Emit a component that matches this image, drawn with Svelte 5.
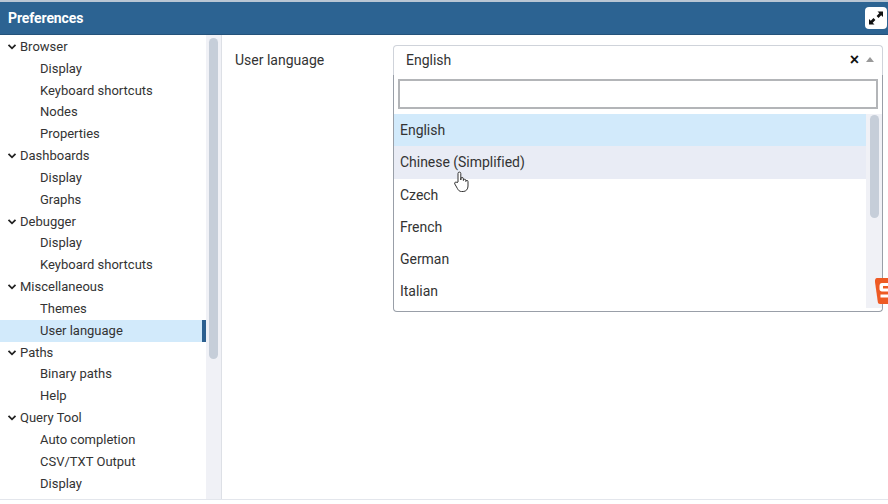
<script>
  const tree = [
    { label: 'Browser', children: ['Display', 'Keyboard shortcuts', 'Nodes', 'Properties'] },
    { label: 'Dashboards', children: ['Display', 'Graphs'] },
    { label: 'Debugger', children: ['Display', 'Keyboard shortcuts'] },
    { label: 'Miscellaneous', children: ['Themes', 'User language'] },
    { label: 'Paths', children: ['Binary paths', 'Help'] },
    { label: 'Query Tool', children: ['Auto completion', 'CSV/TXT Output', 'Display'] }
  ];
  const langs = ['English', 'Chinese (Simplified)', 'Czech', 'French', 'German', 'Italian'];
</script>

<div class="page">
  <div class="topline"></div>
  <header class="header">
    <span class="title">Preferences</span>
    <button class="expand" aria-label="Maximize">
      <svg width="20" height="20" viewBox="0 0 20 20">
        <path d="M11.5 3.5h5.500v5.500l-1.800-1.800-2.700 2.700-1.900-1.900 2.700-2.700z" fill="#111"/>
        <path d="M8.500 16.500h-5.500v-5.500l1.800 1.800 2.700-2.700 1.900 1.900-2.700 2.700z" fill="#111"/>
      </svg>
    </button>
  </header>
  <div class="body">
    <aside class="side">
      <nav class="tree">
        {#each tree as group}
          <div class="row parent">
            <svg class="chev" width="10" height="8" viewBox="0 0 10 8">
              <path d="M1.500 1.800 5 5.300l3.500-3.500" fill="none" stroke="#222" stroke-width="1.800"/>
            </svg>
            {group.label}
          </div>
          {#each group.children as child}
            <div class="row child" class:active={child === 'User language'}>{child}</div>
          {/each}
        {/each}
      </nav>
      <div class="track"><div class="thumb"></div></div>
    </aside>
    <main class="content">
      <label class="lbl" for="search">User language</label>
      <div class="select">
        <div class="value">
          <span class="val-text">English</span>
          <span class="clear">×</span>
          <span class="arrow"></span>
        </div>
        <div class="dropdown">
          <div class="searchbox"><input id="search" type="text" /></div>
          <div class="list">
            <div class="options">
              {#each langs as l, i}
                <div class="opt" class:sel={i === 0} class:hov={i === 1}>{l}</div>
              {/each}
            </div>
            <div class="dd-track"><div class="dd-thumb"></div></div>
          </div>
          <svg class="cursor" width="18" height="22" viewBox="0 0 18 22">
            <path d="M5 11V2.500a1.400 1.400 0 0 1 2.800 0V9l0-1.200a1.300 1.300 0 0 1 2.600 0V9.500a1.200 1.200 0 0 1 2.400 0v1a1.100 1.100 0 0 1 2.200 0v4.500c0 3-1.800 5.500-4.800 5.500H8.500c-2 0-3-1-4-2.800L1.800 13c-.8-1.500 1.200-2.800 2.200-1.400z" fill="#fff" stroke="#333" stroke-width="1"/>
          </svg>
        </div>
      </div>
      <svg class="badge" width="14" height="26" viewBox="0 0 14 26">
        <path d="M3 0h11v26H6C4.500 26 4 25 3.800 24L1 4c-.2-2.500.6-4 2-4z" fill="#ee5a24"/>
        <path d="M14 5H8C6 5 5.500 6.500 5.500 8v3c0 1.500 1 2.500 2.500 2.500h6v-3H9V8h5zM14 16.500H6.500v3H14z" fill="#fff"/>
      </svg>
    </main>
  </div>
</div>

<style>
  :global(body) { margin: 0; background: #fff; }
  .page {
    width: 888px;
    height: 504px;
    display: flex;
    flex-direction: column;
    overflow: hidden;
    font-family: Roboto, "Liberation Sans", sans-serif;
    font-size: 14px;
    color: #222;
    background: #fff;
  }
  .topline { height: 2px; background: #b9c6d4; flex: none; }
  .header {
    height: 32px;
    flex: none;
    background: #2c6392;
    display: flex;
    align-items: center;
    justify-content: space-between;
    padding: 0 0 0 8px;
    border-bottom: 1px solid #24527a;
    box-sizing: content-box;
  }
  .title { color: #fff; font-weight: 700; font-size: 14px; letter-spacing: -0.1px; }
  .expand {
    width: 22px;
    height: 22px;
    margin-right: 1px;
    padding: 0;
    border: 0;
    border-radius: 4px;
    background: #fff;
    display: flex;
    align-items: center;
    justify-content: center;
  }
  .body { flex: 1; display: flex; min-height: 0; margin-bottom: 4px; border-bottom: 1px solid #e3e6ec; }
  .side {
    width: 222px;
    flex: none;
    display: flex;
    box-sizing: border-box;
    border-right: 1px solid #dde0e6;
    overflow: hidden;
  }
  .tree { width: 206px; flex: none; padding-top: 1px; font-size: 13px; }
  .row {
    height: 21.84px;
    line-height: 21.84px;
    white-space: nowrap;
    color: #333;
  }
  .parent { padding-left: 7px; display: flex; align-items: center; gap: 3px; }
  .child { padding-left: 40px; }
  .active { background: #d2eafb; box-shadow: inset -4px 0 0 #2c5f8f; }
  .track { flex: 1; background: #f0f1f6; padding: 3px 3px 0 3px; }
  .thumb { width: 9px; height: 321px; border-radius: 5px; background: #c6ced9; }
  .content { flex: 1; position: relative; padding: 10px 0 0 13px; display: flex; align-items: flex-start; }
  .lbl { width: 158px; flex: none; line-height: 30px; color: #333; }
  .select { width: 490px; position: relative; flex: none; }
  .value {
    border: 1px solid #cfd3da;
    border-bottom-color: #e5e7eb;
    border-radius: 4px 4px 0 0;
    display: flex;
    align-items: center;
    padding: 0 8px 2px 12px;
    box-sizing: content-box;
    height: 27px;
  }
  .val-text { flex: 1; color: #333; }
  .clear { font-weight: 700; font-size: 16px; color: #111; margin-right: 7px; font-family: "Liberation Sans", sans-serif; }
  .arrow {
    width: 0;
    height: 0;
    border-left: 4px solid transparent;
    border-right: 4px solid transparent;
    border-bottom: 5px solid #999;
  }
  .dropdown {
    position: absolute;
    top: 30px;
    left: 0;
    width: 490px;
    height: 237px;
    box-sizing: border-box;
    background: #fff;
    border: 1px solid #999fa8;
    border-top: 0;
    border-radius: 0 0 4px 4px;
  }
  .searchbox { padding: 4px 4px 5px 4px; }
  .searchbox input {
    display: block;
    width: 100%;
    height: 30px;
    box-sizing: border-box;
    border: 2px solid #b3b5b8;
    outline: 0;
    padding: 0 4px;
  }
  .list { display: flex; height: 194px; overflow: hidden; }
  .options { flex: 1; }
  .opt { height: 32.3px; line-height: 32.3px; padding-left: 6px; color: #333; letter-spacing: -0.03px; }
  .sel { background: #d2eafb; }
  .hov { background: #e9ecf5; }
  .dd-track { width: 16px; background: #f0f1f6; padding: 1px 3px 0 4px; box-sizing: border-box; }
  .dd-thumb { width: 9px; height: 103px; border-radius: 5px; background: #c6ced9; }
  .cursor { position: absolute; left: 59px; top: 96px; }
  .badge { position: absolute; left: 652px; top: 243px; }
</style>
